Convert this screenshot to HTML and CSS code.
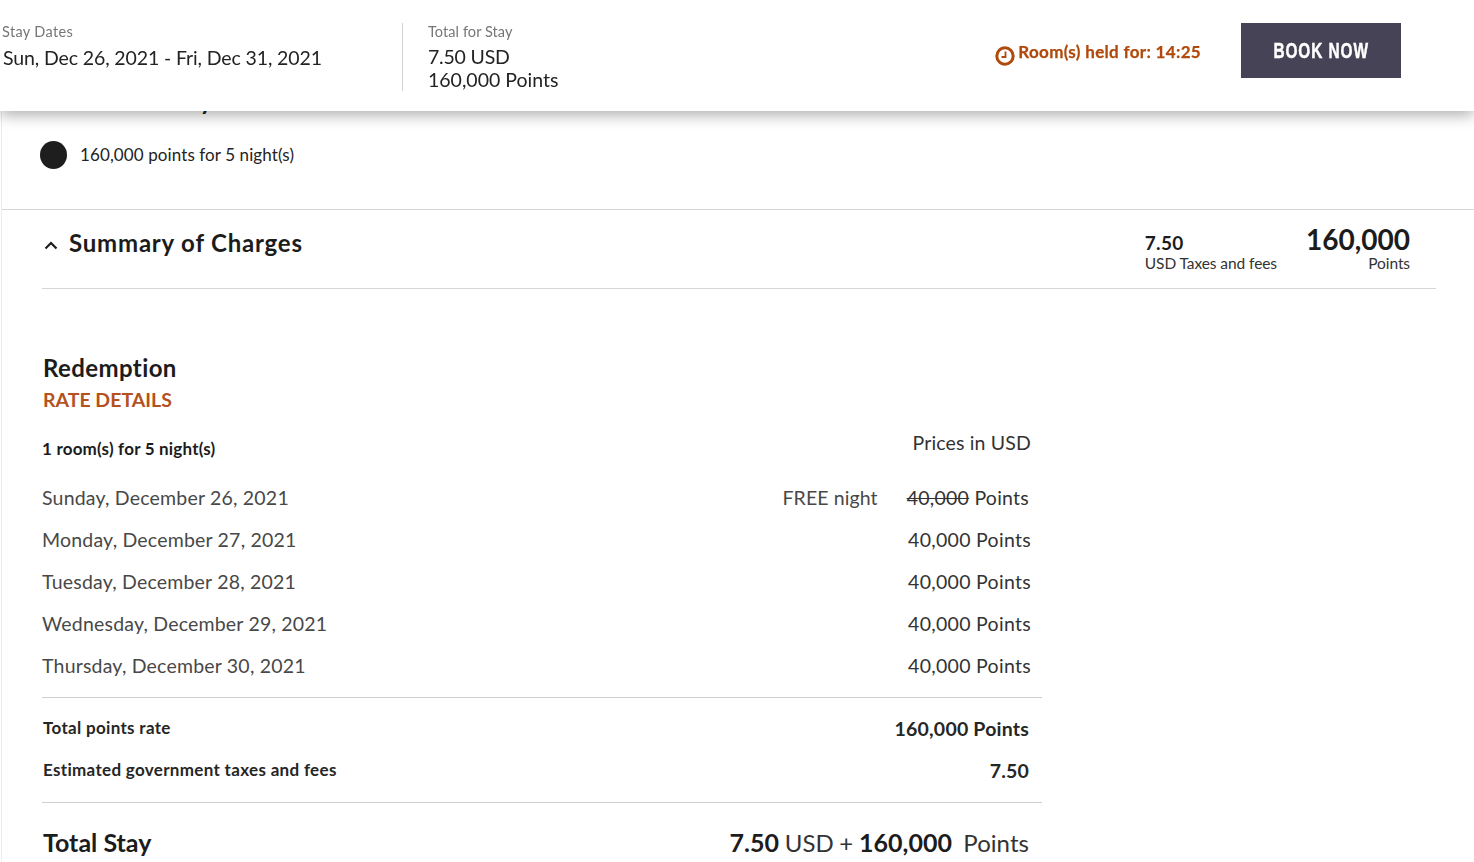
FILE: index.html
```html
<!DOCTYPE html>
<html lang="en">
<head>
<meta charset="utf-8">
<title>Summary of Charges</title>
<link rel="stylesheet" href="styles.css">
</head>
<body>
<header class="topbar">
  <div class="stay-dates">
    <div class="bar-label">Stay Dates</div>
    <div class="bar-value dates">Sun, Dec 26, 2021 - Fri, Dec 31, 2021</div>
  </div>
  <div class="stay-total">
    <div class="bar-label">Total for Stay</div>
    <div class="bar-value total-first">7.50 USD</div>
    <div class="bar-value">160,000 Points</div>
  </div>
  <div class="hold">
    <svg class="clock" viewBox="0 0 20 20" width="20" height="20" aria-hidden="true"><circle cx="10" cy="10" r="8.2" fill="none" stroke="#b04a0c" stroke-width="3"/><path d="M10.500 5.500v5.500H6.500" fill="none" stroke="#b04a0c" stroke-width="1.800"/></svg>
    <span class="hold-text">Room(s) held for: 14:25</span>
  </div>
  <button class="book"><span class="book-text">BOOK NOW</span></button>
</header>

<main class="page">
  <section class="points">
    <h2 class="points-title">Points Summary</h2>
    <div class="points-option"><span class="dot"></span><span>160,000 points for 5 night(s)</span></div>
  </section>

  <section class="charges">
    <div class="charges-head">
      <svg class="chevron" viewBox="0 0 14 9" width="14" height="9" aria-hidden="true"><path d="M1.500 7.500 7 2l5.500 5.500" fill="none" stroke="#1c1c1c" stroke-width="2.200"/></svg>
      <h2 class="charges-title">Summary of Charges</h2>
      <div class="head-tax"><strong>7.50</strong><span>USD Taxes and fees</span></div>
      <div class="head-points"><strong>160,000</strong><span>Points</span></div>
    </div>

    <div class="details">
      <h3 class="plan">Redemption</h3>
      <div class="rate-link">RATE DETAILS</div>
      <div class="rooms-row">
        <span class="rooms">1 room(s) for 5 night(s)</span>
        <span class="currency">Prices in USD</span>
      </div>
      <div class="nights">
        <div class="night"><span class="night-date">Sunday, December 26, 2021</span><span class="free">FREE night</span><span class="price price-first"><s>40,000</s> Points</span></div>
        <div class="night"><span class="night-date">Monday, December 27, 2021</span><span class="price">40,000 Points</span></div>
        <div class="night"><span class="night-date">Tuesday, December 28, 2021</span><span class="price">40,000 Points</span></div>
        <div class="night"><span class="night-date">Wednesday, December 29, 2021</span><span class="price">40,000 Points</span></div>
        <div class="night"><span class="night-date">Thursday, December 30, 2021</span><span class="price">40,000 Points</span></div>
      </div>
      <div class="totals">
        <div class="total-row"><span>Total points rate</span><span class="total-amount">160,000 Points</span></div>
        <div class="total-row"><span>Estimated government taxes and fees</span><span class="total-amount">7.50</span></div>
      </div>
      <div class="grand">
        <span class="grand-label">Total Stay</span>
        <span class="grand-value"><strong>7.50</strong> USD + <strong>160,000</strong>&nbsp; Points</span>
      </div>
    </div>
  </section>
</main>
</body>
</html>
```
FILE: styles.css
```css
* { box-sizing: border-box; }
html, body { margin: 0; padding: 0; height: 862px; overflow: hidden; }
body { font-family: "Lato", "Liberation Sans", sans-serif; color: #1c1c1c; background: #fff; }

.topbar {
  position: fixed; top: 0; left: 0; right: 0; height: 111px; background: #fff;
  box-shadow: 0 4px 14px rgba(0,0,0,.32); z-index: 2;
  display: flex; align-items: flex-start; padding: 23px 73px 0 2px;
}
.stay-dates { width: 400px; }
.stay-total { height: 68px; border-left: 1px solid #d4d4d4; padding-left: 25px; }
.bar-label { font-size: 14.500px; line-height: 18px; color: #767676; letter-spacing: .08px; }
.stay-dates .bar-label { letter-spacing: .35px; }
.bar-value { font-size: 19.500px; line-height: 23px; color: #232323; }
.dates { margin-top: 5px; margin-left: 1px; letter-spacing: -.12px; }
.total-first { margin-top: 4px; letter-spacing: -.2px; }
.hold { margin-left: auto; display: flex; align-items: flex-start; gap: 3px; margin-top: 18px; }
.clock { margin-top: 5px; }
.hold-text { font-size: 17px; line-height: 21px; font-weight: 700; color: #b04a0c; letter-spacing: .32px; -webkit-text-stroke: .25px #b04a0c; }
.book {
  display: flex; align-items: center; justify-content: center;
  width: 160px; height: 55px; margin-left: 40px; padding: 0; border: 0; background: #474356; color: #fff;
}
.book-text {
  display: inline-block; transform: scaleX(.7);
  font-family: "Liberation Sans", sans-serif; font-weight: 700; font-size: 22px; line-height: 26px; letter-spacing: 1.300px; white-space: nowrap;
  -webkit-text-stroke: .5px #fff;
}

.page { border-left: 1px solid #ececec; margin-left: 1px; }
.points { height: 209px; padding: 86px 0 0 40px; }
.points-title { margin: 0 0 0 1px; font-size: 24px; line-height: 30px; font-weight: 700; letter-spacing: -.3px; }
.points-option { display: flex; align-items: center; gap: 13px; margin-top: 25px; font-size: 17px; line-height: 28px; color: #232323; letter-spacing: .1px; }
.dot { width: 27px; height: 28px; border-radius: 50%; background: #1e1e1e; margin-left: -2px; }

.charges { border-top: 1px solid #d6d6d6; }
.charges-head {
  margin: 0 38px 0 40px; height: 79px; border-bottom: 1px solid #d6d6d6;
  display: flex; align-items: flex-start;
}
.chevron { margin: 31px 0 0 2px; }
.charges-title { margin: 17px 0 0 11px; font-size: 24px; line-height: 32px; font-weight: 700; letter-spacing: .8px; }
.head-tax { margin: 22px 0 0 auto; display: flex; flex-direction: column; }
.head-tax strong { font-size: 19px; line-height: 22px; letter-spacing: .3px; }
.head-points { margin: 14px 26px 0 29px; display: flex; flex-direction: column; align-items: flex-end; }
.head-points strong { font-size: 28px; line-height: 30px; }
.head-tax span, .head-points span { font-size: 15.500px; line-height: 19px; color: #333; letter-spacing: -.08px; }

.details { width: 1000px; margin-left: 40px; }
.plan { margin: 63px 0 0 1px; font-size: 24px; line-height: 32px; font-weight: 700; letter-spacing: .4px; }
.rate-link { margin: 4px 0 0 1px; font-size: 19.500px; line-height: 24px; font-weight: 700; color: #b4521f; }
.rooms-row { display: flex; justify-content: space-between; align-items: flex-start; padding-right: 11px; height: 51px; margin-top: 13px; }
.rooms { font-size: 17px; line-height: 22px; font-weight: 700; margin-top: 13px; letter-spacing: .2px; }
.currency { font-size: 19.500px; line-height: 24px; color: #333; margin-top: 6px; letter-spacing: .15px; }
.nights { border-bottom: 1px solid #cfcfcf; padding-bottom: 11px; }
.night { display: flex; align-items: center; height: 42px; font-size: 19.500px; color: #484848; padding-right: 11px; letter-spacing: .2px; }
.night-date { margin-right: auto; }
.free { margin-right: 29px; letter-spacing: .1px; }
.price { color: #333; letter-spacing: .3px; }
.price-first { margin-right: 2px; letter-spacing: .25px; }
.totals { border-bottom: 1px solid #cfcfcf; padding: 8px 0 12px; }
.total-row { display: flex; justify-content: space-between; align-items: center; height: 42px; padding: 0 13px 0 1px; font-size: 17px; font-weight: 700; color: #262626; letter-spacing: .32px; }
.total-amount { font-size: 19.500px; margin-top: 3px; letter-spacing: .2px; }
.grand { display: flex; justify-content: space-between; align-items: center; height: 78px; padding: 0 13px 0 1px; }
.grand-label { font-size: 25px; font-weight: 700; }
.grand-value { font-size: 24px; color: #333; word-spacing: -.6px; letter-spacing: .05px; }
.grand-value strong { color: #1c1c1c; font-size: 25px; }
```
